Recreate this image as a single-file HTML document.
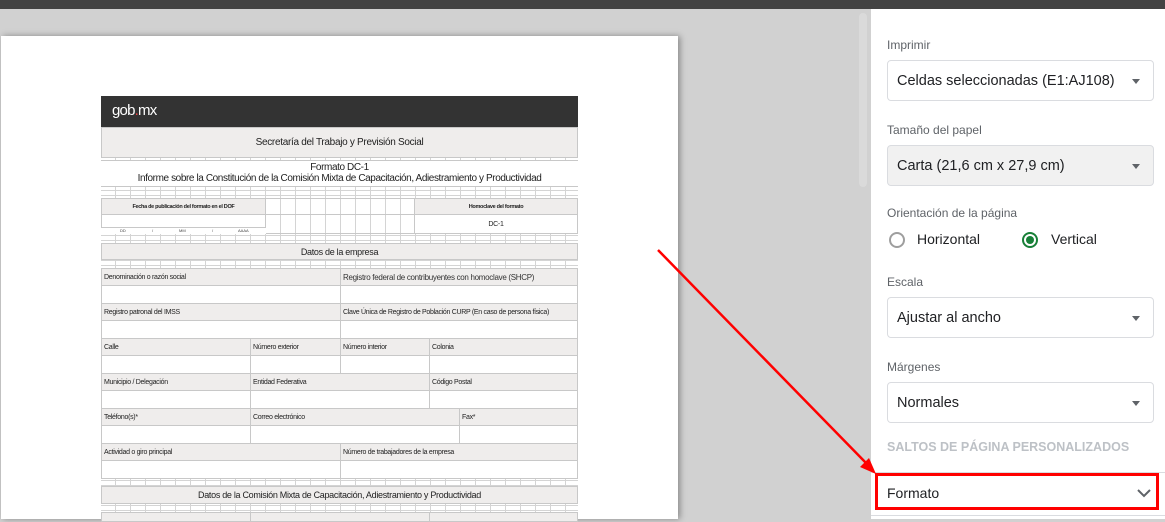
<!DOCTYPE html>
<html><head><meta charset="utf-8">
<style>
*{margin:0;padding:0;box-sizing:border-box}
body{width:1165px;height:519px;overflow:hidden;background:#d1d1d1;font-family:"Liberation Sans",Arial,sans-serif;position:relative}
.a{position:absolute}
.top{left:0;top:0;width:1165px;height:9px;background:#434343}
.sb{left:859px;top:13px;width:8px;height:174px;background:#dadada;border-radius:4px}
.page{left:1px;top:36px;width:677px;height:483px;background:#fff;box-shadow:2px 0 6px rgba(0,0,0,.35)}
.grid{background-color:#fff;background-image:repeating-linear-gradient(90deg,transparent 0 14px,#d4d4d4 14px 15px),repeating-linear-gradient(180deg,transparent 0 4px,#d4d4d4 4px 5px)}
.vg{background-color:#fff;background-image:repeating-linear-gradient(90deg,transparent 0 14px,#d4d4d4 14px 15px)}
.g{background:#efedec;border:1px solid #c8c8c8}
.w{background:#fff;border:1px solid #c8c8c8}
.t{font-size:7px;color:#222;letter-spacing:-.3px;padding-left:2px;display:flex;align-items:center;white-space:nowrap}
.c{justify-content:center;padding:0}
.panel{left:871px;top:9px;width:294px;height:510px;background:#fff}
.lbl{font-size:12px;color:#5f6368;left:887px}
.sel{left:887px;width:267px;height:41px;border:1px solid #dadce0;border-radius:4px;font-size:14.5px;color:#202124;padding-left:9px;display:flex;align-items:center}
.sel:after{content:"";position:absolute;right:13px;top:18px;border-left:4.5px solid transparent;border-right:4.5px solid transparent;border-top:5px solid #5f6368}
</style></head><body>
<div class="a top"></div>
<div class="a sb"></div>
<div class="a page"></div>
<!-- table -->
<div class="a grid" style="left:101px;top:96px;width:477px;height:423px"></div>
<div class="a vg" style="left:266px;top:198px;width:148px;height:36px;border-top:1px solid #c8c8c8;border-bottom:1px solid #c8c8c8"></div>
<div class="a" style="left:266px;top:214px;width:148px;height:1px;background:#c8c8c8"></div>
<div class="a" style="left:101px;top:96px;width:477px;height:31px;background:#333;color:#fff;font-size:15px;padding:6px 0 0 11px;letter-spacing:-.8px">gob<span style="color:#e44">.</span>mx</div>
<div class="a g t c" style="left:101px;top:127px;width:477px;height:31px;font-size:10px">Secretaría del Trabajo y Previsión Social</div>
<div class="a w c" style="left:101px;top:160px;width:477px;height:27px;font-size:10px;line-height:11px;text-align:center;padding-top:1px;color:#222;letter-spacing:-.4px;border-left:none;border-right:none">Formato DC-1<br>Informe sobre la Constitución de la Comisión Mixta de Capacitación, Adiestramiento y Productividad</div>
<div class="a g t c" style="left:101px;top:198px;width:165px;height:17px;font-size:5.5px;font-weight:bold">Fecha de publicación del formato en el DOF</div>
<div class="a w" style="left:101px;top:214px;width:165px;height:14px"></div>
<div class="a" style="left:101px;top:228px;width:165px;height:6px;font-size:4px;color:#444;background:#fff">
<span class="a" style="left:19px;top:0">DD</span><span class="a" style="left:51px;top:0">/</span><span class="a" style="left:78px;top:0">MM</span><span class="a" style="left:111px;top:0">/</span><span class="a" style="left:137px;top:0">AAAA</span></div>
<div class="a g t c" style="left:414px;top:198px;width:164px;height:17px;font-size:5.5px;font-weight:bold">Homoclave del formato</div>
<div class="a w t c" style="left:414px;top:214px;width:164px;height:20px">DC-1</div>
<div class="a g t c" style="left:101px;top:243px;width:477px;height:17px;font-size:9px">Datos de la empresa</div>
<div class="a g t" style="left:101px;top:268px;width:240px;height:18px">Denominación o razón social</div>
<div class="a g t" style="left:340px;top:268px;width:238px;height:18px;font-size:8px;color:#333">Registro federal de contribuyentes con homoclave (SHCP)</div>
<div class="a w" style="left:101px;top:285px;width:240px;height:19px"></div><div class="a w" style="left:340px;top:285px;width:238px;height:19px"></div>
<div class="a g t" style="left:101px;top:303px;width:240px;height:18px">Registro patronal del IMSS</div>
<div class="a g t" style="left:340px;top:303px;width:238px;height:18px">Clave Única de Registro de Población CURP (En caso de persona física)</div>
<div class="a w" style="left:101px;top:320px;width:240px;height:19px"></div><div class="a w" style="left:340px;top:320px;width:238px;height:19px"></div>
<div class="a g t" style="left:101px;top:338px;width:150px;height:18px">Calle</div>
<div class="a g t" style="left:250px;top:338px;width:91px;height:18px">Número exterior</div>
<div class="a g t" style="left:340px;top:338px;width:90px;height:18px">Número interior</div>
<div class="a g t" style="left:429px;top:338px;width:149px;height:18px">Colonia</div>
<div class="a w" style="left:101px;top:355px;width:150px;height:19px"></div><div class="a w" style="left:250px;top:355px;width:91px;height:19px"></div><div class="a w" style="left:340px;top:355px;width:90px;height:19px"></div><div class="a w" style="left:429px;top:355px;width:149px;height:19px"></div>
<div class="a g t" style="left:101px;top:373px;width:150px;height:18px">Municipio / Delegación</div>
<div class="a g t" style="left:250px;top:373px;width:180px;height:18px">Entidad Federativa</div>
<div class="a g t" style="left:429px;top:373px;width:149px;height:18px">Código Postal</div>
<div class="a w" style="left:101px;top:390px;width:150px;height:19px"></div><div class="a w" style="left:250px;top:390px;width:180px;height:19px"></div><div class="a w" style="left:429px;top:390px;width:149px;height:19px"></div>
<div class="a g t" style="left:101px;top:408px;width:150px;height:18px">Teléfono(s)*</div>
<div class="a g t" style="left:250px;top:408px;width:210px;height:18px">Correo electrónico</div>
<div class="a g t" style="left:459px;top:408px;width:119px;height:18px">Fax*</div>
<div class="a w" style="left:101px;top:425px;width:150px;height:19px"></div><div class="a w" style="left:250px;top:425px;width:210px;height:19px"></div><div class="a w" style="left:459px;top:425px;width:119px;height:19px"></div>
<div class="a g t" style="left:101px;top:443px;width:240px;height:18px">Actividad o giro principal</div>
<div class="a g t" style="left:340px;top:443px;width:238px;height:18px">Número de trabajadores de la empresa</div>
<div class="a w" style="left:101px;top:460px;width:240px;height:19px"></div><div class="a w" style="left:340px;top:460px;width:238px;height:19px"></div>
<div class="a g t c" style="left:101px;top:486px;width:477px;height:18px;font-size:9px">Datos de la Comisión Mixta de Capacitación, Adiestramiento y Productividad</div>
<div class="a g" style="left:101px;top:512px;width:150px;height:10px"></div><div class="a g" style="left:250px;top:512px;width:180px;height:10px"></div><div class="a g" style="left:429px;top:512px;width:149px;height:10px"></div>
<!-- panel -->
<div class="a panel"></div>
<div class="a lbl" style="top:38px">Imprimir</div>
<div class="a sel" style="top:60px">Celdas seleccionadas (E1:AJ108)</div>
<div class="a lbl" style="top:123px">Tamaño del papel</div>
<div class="a sel" style="top:145px;background:#f1f1f1">Carta (21,6 cm x 27,9 cm)</div>
<div class="a lbl" style="top:206px">Orientación de la página</div>
<div class="a" style="left:889px;top:232px;width:16px;height:16px;border:2px solid #9e9e9e;border-radius:50%"></div>
<div class="a" style="left:917px;top:231px;font-size:14px;color:#202124">Horizontal</div>
<div class="a" style="left:1022px;top:232px;width:16px;height:16px;border:2px solid #188038;border-radius:50%"><div style="margin:2px;width:8px;height:8px;border-radius:50%;background:#188038"></div></div>
<div class="a" style="left:1051px;top:231px;font-size:14px;color:#202124">Vertical</div>
<div class="a lbl" style="top:275px">Escala</div>
<div class="a sel" style="top:297px">Ajustar al ancho</div>
<div class="a lbl" style="top:360px">Márgenes</div>
<div class="a sel" style="top:382px">Normales</div>
<div class="a" style="left:887px;top:440px;font-size:12.5px;color:#bdc1c6;font-weight:bold">SALTOS DE PÁGINA PERSONALIZADOS</div>
<div class="a" style="left:871px;top:472px;width:294px;height:1px;background:#dadce0"></div>
<div class="a" style="left:871px;top:515px;width:294px;height:1px;background:#dadce0"></div>
<div class="a" style="left:875px;top:473px;width:284px;height:37px;border:3px solid #f00"></div>
<div class="a" style="left:887px;top:485px;font-size:14px;color:#202124">Formato</div>
<svg class="a" style="left:1136px;top:487px" width="16" height="12"><path d="M2 3 L8 9 L14 3" fill="none" stroke="#5f6368" stroke-width="2"/></svg>
<svg class="a" style="left:0;top:0" width="1165" height="519"><line x1="658" y1="250" x2="868" y2="465" stroke="#f00" stroke-width="2.5"/><polygon points="876,474 860,467 869,458" fill="#f00"/></svg>
</body></html>
